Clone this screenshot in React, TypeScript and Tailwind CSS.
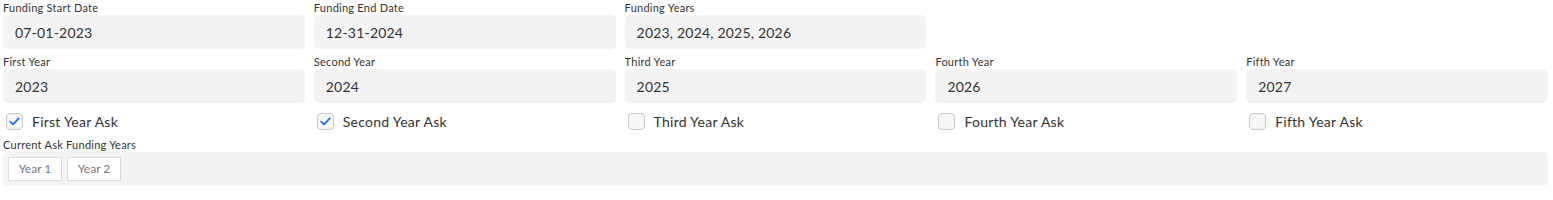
import React from "react";

const font = { fontFamily: "Lato, 'Open Sans', sans-serif" };

function Field({ label, value }: { label: string; value: string }) {
  return (
    <div className="flex flex-col">
      <div className="text-[11px] leading-[15px] text-[#333] truncate tracking-[0.25px]">{label}</div>
      <div className="h-[34px] rounded-[5px] bg-[#f3f3f3] px-3 flex items-center text-[14px] text-[#333] tracking-[0.2px]">
        {value}
      </div>
    </div>
  );
}

function Check({ label, checked }: { label: string; checked: boolean }) {
  return (
    <div className="flex items-center h-[28px] pl-[3px] gap-[9px]">
      <div className="w-[17px] h-[17px] rounded-[4px] border border-[#c8c8c8] bg-[#f7f7f7] flex items-center justify-center">
        {checked && (
          <svg width="11" height="9" viewBox="0 0 11 9" fill="none">
            <path d="M1.2 4.6 L4 7.3 L9.8 1.4" stroke="#1a6fe0" strokeWidth="1.8" strokeLinecap="round" strokeLinejoin="round" />
          </svg>
        )}
      </div>
      <span className="text-[14px] text-[#333] tracking-[0.25px]">{label}</span>
    </div>
  );
}

export default function App() {
  return (
    <div className="bg-white w-[1553px] h-[200px] pl-[3px] pr-[5px]" style={font}>
      <div className="grid grid-cols-5 gap-x-[9px]">
        <Field label="Funding Start Date" value="07-01-2023" />
        <Field label="Funding End Date" value="12-31-2024" />
        <Field label="Funding Years" value="2023, 2024, 2025, 2026" />
        <div />
        <div />
      </div>
      <div className="grid grid-cols-5 gap-x-[9px] mt-[5px]">
        <Field label="First Year" value="2023" />
        <Field label="Second Year" value="2024" />
        <Field label="Third Year" value="2025" />
        <Field label="Fourth Year" value="2026" />
        <Field label="Fifth Year" value="2027" />
      </div>
      <div className="grid grid-cols-5 gap-x-[9px] mt-[4px]">
        <Check label="First Year Ask" checked />
        <Check label="Second Year Ask" checked />
        <Check label="Third Year Ask" checked={false} />
        <Check label="Fourth Year Ask" checked={false} />
        <Check label="Fifth Year Ask" checked={false} />
      </div>
      <div className="mt-[2px]">
        <div className="text-[11px] leading-[15px] text-[#333] tracking-[0.25px]">Current Ask Funding Years</div>
        <div className="h-[34px] rounded-[5px] bg-[#f3f3f3] px-[5px] flex items-center gap-[5px]">
          <span className="h-[24px] w-[54px] border border-[#dcdcdc] bg-white flex items-center justify-center text-[12px] text-[#777]">Year 1</span>
          <span className="h-[24px] w-[54px] border border-[#dcdcdc] bg-white flex items-center justify-center text-[12px] text-[#777]">Year 2</span>
        </div>
      </div>
    </div>
  );
}
